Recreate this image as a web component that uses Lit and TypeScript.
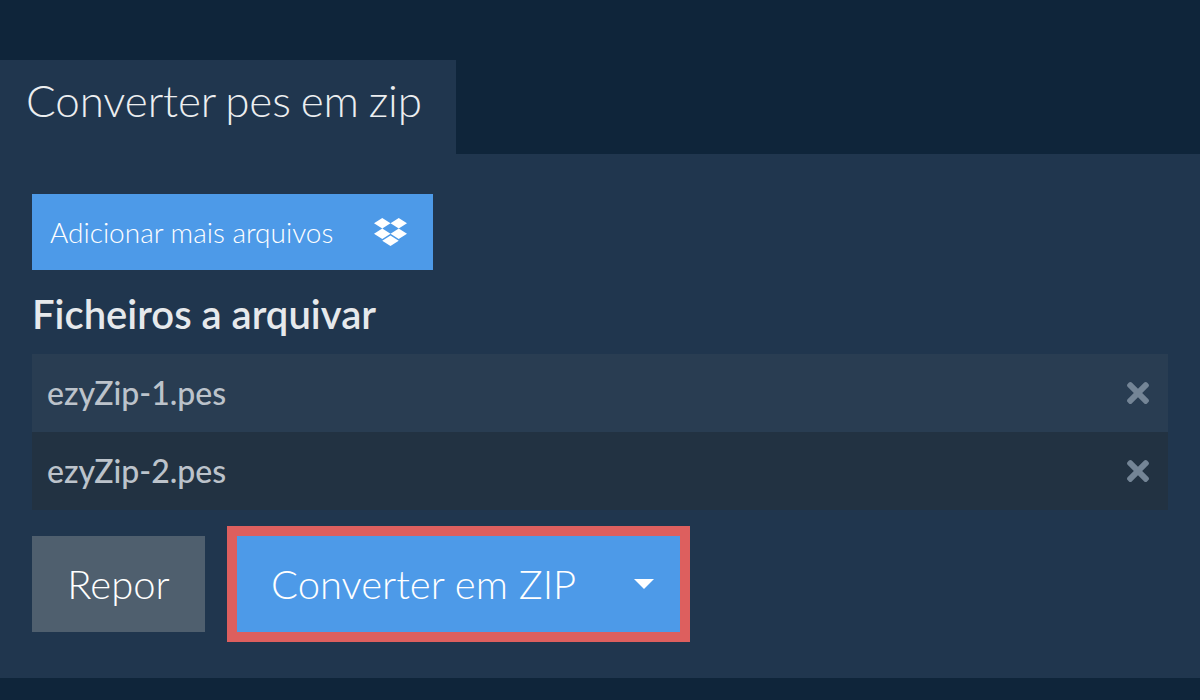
import { LitElement, html, css } from "lit";
import { customElement } from "lit/decorators.js";

const X_PATH = "M242.72 256l100.07-100.07c12.28-12.28 12.28-32.19 0-44.48l-22.24-22.24c-12.28-12.28-32.19-12.28-44.48 0L176 189.28 75.93 89.21c-12.28-12.28-32.19-12.28-44.48 0L9.21 111.45c-12.28 12.28-12.28 32.19 0 44.48L109.28 256 9.21 356.07c-12.28 12.28-12.28 32.19 0 44.48l22.24 22.24c12.28 12.28 32.2 12.28 44.48 0L176 322.72l100.07 100.07c12.28 12.28 32.2 12.28 44.48 0l22.24-22.24c12.28-12.28 12.28-32.19 0-44.48L242.72 256z";
const DROPBOX_PATH = "M264.4 116.3l-132 84.3 132 84.3-132 84.3L0 284.1l132.3-84.3L0 116.3 132.3 32l132.1 84.3zM131.6 395.7l132-84.3 132 84.3-132 84.3-132-84.3zm132.8-111.6l132-84.3-132-83.6L395.7 32 528 116.3l-132.3 84.3L528 284.8l-132.3 84.3-131.3-85z";

@customElement("app-root")
export class AppRoot extends LitElement {
  static styles = css`
    :host {
      display: block;
      min-height: 700px;
      background: #0f253a;
      font-family: Lato, "Liberation Sans", sans-serif;
      padding-top: 60px;
      box-sizing: border-box;
    }
    .tab {
      width: 456px;
      height: 94px;
      box-sizing: border-box;
      padding: 16px 0 0 26px;
      background: #20364e;
      color: #eceef0;
      font-size: 44px;
      font-weight: 300;
      line-height: 48px;
      word-spacing: -2px;
      letter-spacing: -0.1px;
    }
    .panel {
      background: #20364e;
      height: 524px;
      box-sizing: border-box;
      padding: 40px 32px 0;
    }
    .add {
      width: 401px;
      height: 76px;
      box-sizing: border-box;
      padding: 0 26px 0 18px;
      background: #4d9ae8;
      color: #fff;
      display: flex;
      align-items: center;
      justify-content: space-between;
      font-size: 28px;
      font-weight: 300;
    }
    .add svg { width: 33px; height: 32px; fill: #fff; }
    h2 {
      margin: 0;
      height: 84px;
      box-sizing: border-box;
      padding-top: 22px;
      line-height: 44px;
      color: #e6e9ec;
      font-size: 40px;
      font-weight: 600;
    }
    .row {
      height: 78px;
      box-sizing: border-box;
      padding: 0 19px 0 15px;
      display: flex;
      align-items: center;
      justify-content: space-between;
      font-size: 32px;
      font-weight: 500;
      color: #bcc3cb;
    }
    .row span { margin-top: -2px; }
    .row.odd { background: #293d52; }
    .row.even { background: #223242; }
    .row svg { width: 22px; height: 22px; fill: #748596; }
    .actions {
      display: flex;
      align-items: center;
      gap: 22px;
      height: 116px;
      margin-top: 16px;
    }
    .reset {
      width: 173px;
      height: 96px;
      display: flex;
      align-items: center;
      justify-content: center;
      background: #4f5f6e;
      color: #fff;
      font-size: 40px;
      font-weight: 300;
    }
    .convert {
      width: 463px;
      height: 116px;
      box-sizing: border-box;
      border: 10px solid #dd5f5e;
      background: #4d9ae8;
      color: #fff;
      display: flex;
      align-items: center;
      justify-content: space-between;
      padding: 0 26px 0 34px;
      font-size: 40px;
      font-weight: 300;
    }
    .caret {
      width: 0;
      height: 0;
      border-left: 10px solid transparent;
      border-right: 10px solid transparent;
      border-top: 10px solid #fff;
    }
  `;

  render() {
    return html`
      <div class="tab">Converter pes em zip</div>
      <div class="panel">
        <div class="add">
          <span>Adicionar mais arquivos</span>
          <svg viewBox="0 0 528 512"><path d=${DROPBOX_PATH}></path></svg>
        </div>
        <h2>Ficheiros a arquivar</h2>
        ${["ezyZip-1.pes", "ezyZip-2.pes"].map(
          (n, i) => html`<div class="row ${i % 2 ? "even" : "odd"}">
            <span>${n}</span>
            <svg viewBox="0 80 352 352"><path d=${X_PATH}></path></svg>
          </div>`
        )}
        <div class="actions">
          <div class="reset">Repor</div>
          <div class="convert"><span>Converter em ZIP</span><span class="caret"></span></div>
        </div>
      </div>
    `;
  }
}
